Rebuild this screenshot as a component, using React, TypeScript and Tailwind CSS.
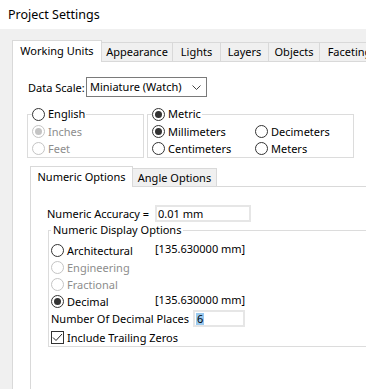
import clsx from "clsx";

const Radio = ({ checked = false, disabled = false }: { checked?: boolean; disabled?: boolean }) => (
  <span
    className={clsx(
      "flex size-[13px] shrink-0 items-center justify-center rounded-full border bg-white",
      disabled ? "border-[#c4c4c4]" : "border-[#333333]"
    )}
  >
    {checked && (
      <span className={clsx("size-[7px] rounded-full", disabled ? "bg-[#c4c4c4]" : "bg-[#333333]")} />
    )}
  </span>
);

const RadioOption = ({
  label,
  checked,
  disabled,
  className,
}: {
  label: string;
  checked?: boolean;
  disabled?: boolean;
  className?: string;
}) => (
  <div
    className={clsx(
      "flex h-[17px] items-center gap-[3px] whitespace-nowrap",
      disabled ? "text-[#8d8d8d]" : "text-black",
      className
    )}
  >
    <Radio checked={checked} disabled={disabled} />
    <span>{label}</span>
  </div>
);

const outerTabs = [
  { label: "Appearance", w: "w-[71px]" },
  { label: "Lights", w: "w-[48px]" },
  { label: "Layers", w: "w-[48px]" },
  { label: "Objects", w: "w-[51px]" },
  { label: "Faceting", w: "w-[60px]" },
];

const TabStrip = () => (
  <div className="flex h-[21px] items-end whitespace-nowrap">
    <div className="relative z-10 -mb-px flex h-[22px] w-[90px] shrink-0 items-center justify-center border-x border-t border-[#d9d9d9] bg-white pb-[2px]">
      Working Units
    </div>
    {outerTabs.map((t) => (
      <div
        key={t.label}
        className={clsx(
          "flex h-[19px] shrink-0 items-center justify-center border-r border-t border-[#d9d9d9] bg-[#f0f0f0]",
          t.w
        )}
      >
        {t.label}
      </div>
    ))}
  </div>
);

const UnitGroups = () => (
  <div className="mt-[10px] flex gap-[3px] pl-[14px]">
    <fieldset className="h-[51px] w-[117px] border border-[#dcdcdc] pl-[4px]">
      <legend className="flex h-[14px] items-center pr-[1px]">
        <RadioOption label="English" className="h-[14px]" />
      </legend>
      <div className="pt-[2px]">
        <RadioOption label="Inches" checked disabled />
        <RadioOption label="Feet" disabled />
      </div>
    </fieldset>
    <fieldset className="h-[51px] w-[207px] border border-[#dcdcdc] pl-[4px]">
      <legend className="flex h-[14px] items-center pr-[1px]">
        <RadioOption label="Metric" checked className="h-[14px]" />
      </legend>
      <div className="grid grid-cols-[103px_1fr] pt-[2px]">
        <RadioOption label="Millimeters" checked />
        <RadioOption label="Decimeters" />
        <RadioOption label="Centimeters" />
        <RadioOption label="Meters" />
      </div>
    </fieldset>
  </div>
);

const NumericPanel = () => (
  <div className="flex-1 whitespace-nowrap border-l border-t border-[#d9d9d9] bg-white pl-[16px]">
    <div className="mt-[18px] flex items-center">
      <span className="w-[108px]">Numeric Accuracy =</span>
      <div className="flex h-[17px] w-[96px] items-center border-2 border-[#e6e6e6] pl-[1px]">0.01 mm</div>
    </div>
    <fieldset className="ml-[1px] w-[330px] border border-[#dcdcdc] pl-[2px]">
      <legend className="px-[2px] leading-[16px]">Numeric Display Options</legend>
      <div className="pt-[4px]">
        <div className="flex h-[17px] items-center">
          <RadioOption label="Architectural" className="w-[104px]" />
          <span className="mb-[4px]">[135.630000 mm]</span>
        </div>
        <RadioOption label="Engineering" disabled />
        <RadioOption label="Fractional" disabled />
        <div className="flex h-[17px] items-center">
          <RadioOption label="Decimal" checked className="w-[104px]" />
          <span className="mb-[4px]">[135.630000 mm]</span>
        </div>
        <div className="flex h-[17px] items-center">
          <span className="w-[142px]">Number Of Decimal Places</span>
          <div className="flex h-[17px] w-[52px] items-center border-2 border-[#e6e6e6] pl-[1px]">
            <span className="bg-[#99c9ef] px-[1px] leading-[12px]">6</span>
          </div>
        </div>
        <div className="mt-[2px] flex h-[17px] items-center gap-[3px]">
          <span className="flex size-[13px] items-center justify-center border border-[#333333] bg-white">
            <svg width="11" height="11" viewBox="0 0 11 11">
              <path d="M1 5.5 L4 8.5 L10 2" fill="none" stroke="#222" strokeWidth="1" />
            </svg>
          </span>
          <span>Include Trailing Zeros</span>
        </div>
      </div>
    </fieldset>
  </div>
);

export default function App() {
  return (
    <div className="flex h-[389px] w-[366px] flex-col overflow-hidden bg-[#f0f0f0] font-['Noto_Sans',sans-serif] text-[11px] leading-[16px] text-black">
      <div className="flex h-[29px] shrink-0 items-center bg-white pl-[8px] text-[12.5px]">Project Settings</div>
      <div className="flex flex-1 flex-col pl-[12px] pt-[11px]">
        <TabStrip />
        <div className="flex w-[380px] flex-1 flex-col border-l border-t border-[#d9d9d9] bg-white">
          <div className="mt-[15px] flex items-end pl-[15px]">
            <span className="w-[58px] pb-[1px]">Data Scale:</span>
            <div className="flex h-[20px] w-[121px] items-center justify-between border border-[#7a7a7a] bg-white pl-[3px] pr-[5px]">
              <span>Miniature (Watch)</span>
              <svg width="9" height="5" viewBox="0 0 9 5">
                <path d="M0.5 0.5 L4.5 4.5 L8.5 0.5" fill="none" stroke="#444" />
              </svg>
            </div>
          </div>
          <UnitGroups />
          <div className="ml-[17px] mt-[8px] flex flex-1 flex-col">
            <div className="flex h-[20px] items-end whitespace-nowrap">
              <div className="relative z-10 -mb-px flex h-[21px] w-[103px] items-center justify-center border-x border-t border-[#d9d9d9] bg-white pb-[1px]">
                Numeric Options
              </div>
              <div className="flex h-[18px] w-[84px] items-center justify-center border-r border-t border-[#d9d9d9] bg-[#f0f0f0]">
                Angle Options
              </div>
            </div>
            <NumericPanel />
          </div>
        </div>
      </div>
    </div>
  );
}
